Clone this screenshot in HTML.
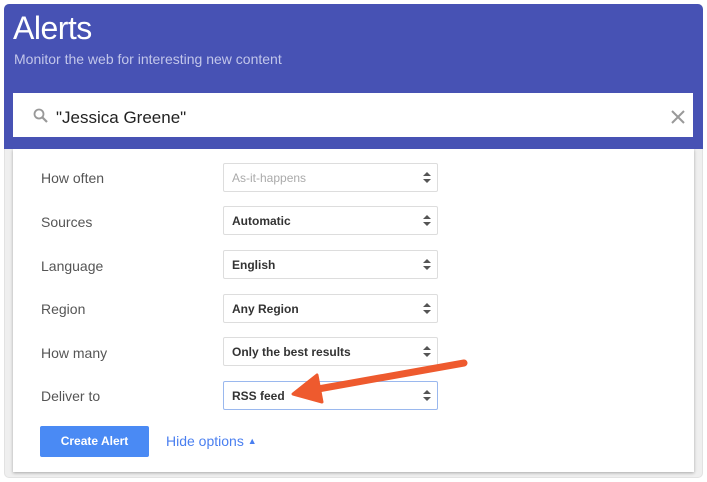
<!DOCTYPE html>
<html><head><style>
body{margin:0;width:707px;height:482px;background:#fff;font-family:"Liberation Sans",sans-serif;position:relative;overflow:hidden}
.outer{position:absolute;left:4px;top:4px;width:699px;height:474px;background:#efefef;border-radius:5px;border:1px solid #e2e2e2;box-sizing:border-box}
.hdr{position:absolute;left:4px;top:4px;width:699px;height:145px;background:#4752b4;border-radius:5px 5px 0 0}
.card{position:absolute;left:13px;top:149px;width:681px;height:323px;background:#fff;box-shadow:0 1px 3px rgba(0,0,0,.3)}
h1{position:absolute;left:13px;top:10px;margin:0;font-weight:normal;color:#fff;font-size:32px;letter-spacing:-.5px}
.sub{position:absolute;left:14px;top:51px;color:#c2c6ea;font-size:14px}
.search{position:absolute;left:13px;top:93px;width:680px;height:44px;background:#fff}
.q{position:absolute;left:56px;top:108px;font-size:17px;color:#222}
.x{position:absolute;left:668px;top:104px;font-size:22px;color:#999}
.lab{position:absolute;left:41px;font-size:14px;color:#555}
.sel{position:absolute;left:223px;width:215px;height:29px;border:1px solid #ddd;border-radius:2px;box-sizing:border-box;font-size:12px;font-weight:bold;color:#333;padding:7px 0 0 8px}
.sel:after{content:"";position:absolute;right:6px;top:8px;border:4px solid transparent;border-bottom:4px solid #555;border-top:0}
.sel:before{content:"";position:absolute;right:6px;top:15px;border:4px solid transparent;border-top:4px solid #555;border-bottom:0}
.btn{position:absolute;left:40px;top:426px;width:109px;height:31px;background:#4a8af4;border-radius:2px;color:#fff;font-size:12px;font-weight:bold;text-align:center;line-height:31px}
.hide{position:absolute;left:166px;top:433px;color:#4a7ff0;font-size:14px}
</style></head><body>
<div class="outer"></div>
<div class="card"></div>
<div class="hdr"></div>
<h1>Alerts</h1>
<div class="sub">Monitor the web for interesting new content</div>
<div class="search"></div>
<svg style="position:absolute;left:33px;top:108px" width="16" height="16"><circle cx="6" cy="6" r="4.5" stroke="#999" stroke-width="1.8" fill="none"/><path d="M9.5 9.5L14 14" stroke="#999" stroke-width="2.2"/></svg>
<div class="q">"Jessica Greene"</div>
<svg style="position:absolute;left:671px;top:110px" width="14" height="14"><path d="M1 1L13 13M13 1L1 13" stroke="#999" stroke-width="2"/></svg>
<div class="lab" style="top:170px">How often</div>
<div class="lab" style="top:214px">Sources</div>
<div class="lab" style="top:258px">Language</div>
<div class="lab" style="top:301px">Region</div>
<div class="lab" style="top:345px">How many</div>
<div class="lab" style="top:388px">Deliver to</div>
<div class="sel" style="top:163px;color:#aaa;font-weight:normal">As-it-happens</div>
<div class="sel" style="top:206px">Automatic</div>
<div class="sel" style="top:250px">English</div>
<div class="sel" style="top:294px">Any Region</div>
<div class="sel" style="top:337px">Only the best results</div>
<div class="sel" style="top:381px;border-color:#9ab8ee">RSS feed</div>
<svg style="position:absolute;left:0;top:0" width="707" height="482"><path d="M464 363L318 389" stroke="#ee5a2e" stroke-width="7" stroke-linecap="round"/><path d="M293 394L317 375L322 402Z" fill="#ee5a2e" stroke="#ee5a2e" stroke-width="3" stroke-linejoin="round"/></svg>
<div class="btn">Create Alert</div>
<div class="hide">Hide options <span style="font-size:9px;position:relative;top:-2px">&#9650;</span></div>
</body></html>
